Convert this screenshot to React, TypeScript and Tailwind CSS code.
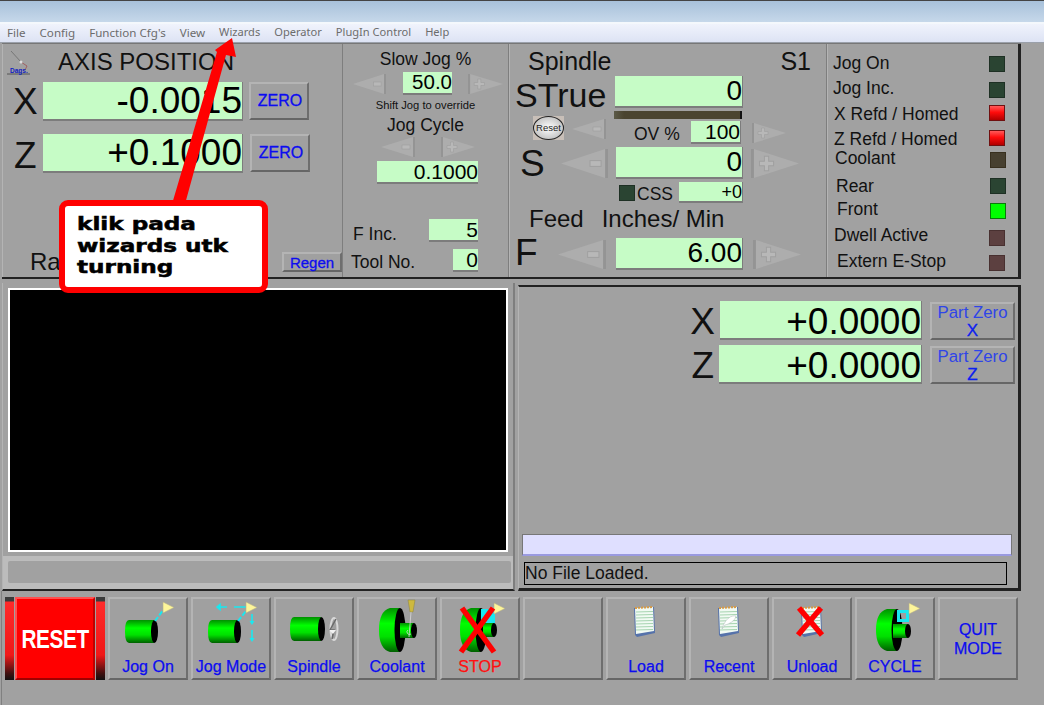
import React from "react";

const bevel = "border-2 border-t-[#b4b4b4] border-l-[#b4b4b4] border-b-[#666666] border-r-[#6e6e6e] bg-[#a0a0a0]";
const fieldBase = "flex items-center justify-end bg-[#c6fcc6] border-b-2 border-r border-b-[#7c7c7c] border-r-[#7c7c7c] text-black leading-none shrink-0";

function ArrowL({ className, m = true }: { className: string; m?: boolean }) {
  return (
    <svg viewBox="0 0 34 20" preserveAspectRatio="none" className={className}>
      <polygon points="0,10 32,0 32,20" fill="#adadad" />
      <rect x="32" y="0" width="2" height="20" fill="#949494" />
      {m && <rect x="21" y="8" width="8" height="4" fill="#b8b8b8" stroke="#a0a0a0" strokeWidth="0.7" />}
    </svg>
  );
}
function ArrowR({ className }: { className: string }) {
  return (
    <svg viewBox="0 0 34 20" preserveAspectRatio="none" className={className}>
      <polygon points="2,0 34,10 2,20" fill="#adadad" />
      <rect x="0" y="0" width="2" height="20" fill="#949494" />
      <path d="M6 8.5h3.5v-3.5h3v3.5h3.5v3h-3.5v3.5h-3v-3.5h-3.5z" fill="#b8b8b8" stroke="#a0a0a0" strokeWidth="0.7" />
    </svg>
  );
}
function Led({ color }: { color: "green" | "red" | "olive" | "lime" | "brown" }) {
  const c = {
    green: "bg-[#2a4432] border-[#1e3024]",
    red: "bg-[linear-gradient(#ff5a5a,#ff0c0c_45%,#b00000)] border-[#701010]",
    olive: "bg-[#474030] border-[#38301f]",
    lime: "bg-[#00ff00] border-[#0a7a0a]",
    brown: "bg-[#5c4040] border-[#483030]",
  }[color];
  return <div className={`w-4 h-4 border shrink-0 ${c}`} />;
}
function Defs() {
  return (
    <defs>
      <linearGradient id="gc" x1="0" y1="0" x2="0" y2="1">
        <stop offset="0" stopColor="#009000" />
        <stop offset="0.35" stopColor="#00ff00" />
        <stop offset="0.65" stopColor="#00e000" />
        <stop offset="1" stopColor="#006000" />
      </linearGradient>
    </defs>
  );
}
function Svg({ children }: { children: React.ReactNode }) {
  return (
    <svg viewBox="2 2 76 58" className="w-[76px] h-[58px] shrink-0">
      <Defs />
      {children}
    </svg>
  );
}
function Cyl({ x, y, w, h }: { x: number; y: number; w: number; h: number }) {
  return (
    <g>
      <path d={`M${x + 4} ${y} H${x + w - 4} V${y + h} H${x + 4} Q${x} ${y + h} ${x} ${y + h / 2} Q${x} ${y} ${x + 4} ${y}z`} fill="url(#gc)" />
      <ellipse cx={x + w - 3.5} cy={y + h / 2} rx="3.5" ry={h / 2} fill="#000" />
    </g>
  );
}
function Tri({ x, y }: { x: number; y: number }) {
  return <polygon points={`${x},${y} ${x + 11},${y + 5.5} ${x},${y + 11}`} fill="#fdf59a" stroke="#b5b08a" strokeWidth="0.6" />;
}
function Chuck({ x, y, h, sx, sy, sw, sh }: { x: number; y: number; h: number; sx: number; sy: number; sw: number; sh: number }) {
  return (
    <g>
      <path d={`M${x + 11} ${y} H${x + 21} V${y + h} H${x + 11} Q${x} ${y + h - 3} ${x} ${y + h / 2} Q${x} ${y + 3} ${x + 11} ${y}z`} fill="url(#gc)" />
      <ellipse cx={x + 21} cy={y + h / 2} rx="5.5" ry={h / 2} fill="#000" />
      <rect x={sx} y={sy} width={sw} height={sh} fill="url(#gc)" />
      <ellipse cx={sx + sw} cy={sy + sh / 2} rx="3" ry={sh / 2} fill="#000" />
    </g>
  );
}
function Pad({ x, children }: { x: number; children?: React.ReactNode }) {
  return (
    <g>
      <polygon points={`${x},11 ${x + 20},10 ${x + 21},36 ${x + 3},40 ${x + 1},38`} fill="#5572aa" />
      <polygon points={`${x + 1},11 ${x + 19},10 ${x + 20},34 ${x + 2},37`} fill="#f1faf3" />
      {[15, 18, 21, 24, 27, 30, 33].map((y) => (
        <line key={y} x1={x + 2} y1={y} x2={x + 19} y2={y - 0.5} stroke="#a6d4b0" strokeWidth="1" />
      ))}
      <line x1={x + 1} y1="11" x2={x + 19} y2="10" stroke="#d79a45" strokeWidth="2" strokeDasharray="2 1" />
      {children}
    </g>
  );
}
const X = ({ a, b, c, d }: { a: number; b: number; c: number; d: number }) => (
  <g stroke="#ff0000" strokeWidth="5.5">
    <line x1={a} y1={b} x2={c} y2={d} />
    <line x1={c - 1} y1={b} x2={a - 1} y2={d} />
  </g>
);
const cyanDash = { stroke: "#19e8f0", strokeWidth: 2, strokeDasharray: "5 2", fill: "none" };

function Btn({ label, children, red, labelClass }: { label: string; children?: React.ReactNode; red?: boolean; labelClass?: string }) {
  return (
    <div className={`${bevel} w-[80px] h-[83px] flex flex-col items-center shrink-0`}>
      {children ?? <div className="h-[58px] shrink-0" />}
      <span className={`text-[16px] leading-[18px] mt-px [-webkit-text-stroke:0.25px_currentColor] ${red ? "text-[#ff1010]" : "text-[#0c0cf0]"} ${labelClass ?? ""}`}>{label}</span>
    </div>
  );
}
function Zero({ className }: { className: string }) {
  return <div className={`${bevel} w-[60px] h-[38px] flex items-center justify-center pl-[2px] text-[16px] text-[#0c0cf0] [-webkit-text-stroke:0.3px_currentColor] ${className}`}>ZERO</div>;
}
function PartZero({ axis }: { axis: string }) {
  return (
    <div className={`${bevel} ml-[8px] w-[85px] h-[38px] flex flex-col items-center text-[#2f45e8] shrink-0`}>
      <span className="text-[16.8px] leading-[17px]">Part Zero</span>
      <span className="text-[17px] leading-[18px] pt-px text-[#0c20f0] [-webkit-text-stroke:0.3px_currentColor]">{axis}</span>
    </div>
  );
}
function LedRow({ label, color, className, textClass }: { label: string; color: "green" | "red" | "olive" | "lime" | "brown"; className: string; textClass?: string }) {
  return (
    <div className={`flex items-center justify-between h-4 ${className}`}>
      <span className={`text-[17.5px] leading-none whitespace-nowrap ${textClass ?? ""}`}>{label}</span>
      <Led color={color} />
    </div>
  );
}

export default function App() {
  return (
    <div className="relative w-[1044px] h-[705px] overflow-hidden flex flex-col bg-[#a1a1a1] text-[#111] [font-family:'Liberation_Sans',Arial,sans-serif]">
      {/* title bar */}
      <div className="h-[22px] shrink-0 border-t border-t-[#444] bg-[linear-gradient(#a8c1da,#c6d8ea)]" />
      {/* menu */}
      <div className="h-[21px] shrink-0 flex items-center pl-[7px] pb-px gap-[14px] border-t-2 border-t-[#f4f8fc] border-b border-b-[#9aa0aa] bg-[linear-gradient(#f0f3fc,#dde3f4)] text-[11.6px] text-[#6c6c6c] [font-family:'Noto_Sans',sans-serif]">
        <span>File</span>
        <span>Config</span>
        <span>Function Cfg's</span>
        <span>View</span>
        <span className="text-[11.1px]">Wizards</span>
        <span className="text-[11.1px]">Operator</span>
        <span className="text-[11.1px]">PlugIn Control</span>
        <span className="text-[11.1px]">Help</span>
      </div>

      {/* upper row */}
      <div className="h-[238px] shrink-0 flex pl-[2px]">
        <div className="flex h-[236px] border-b-2 border-b-[#222] border-t border-t-[#777]">
          {/* axis */}
          <div className="w-[341px] flex flex-col border-l border-l-[#b4b4b4] border-r border-r-[#7e7e7e]">
            <div className="h-[36px] flex items-center pl-[4px] shrink-0">
              <svg viewBox="0 0 24 26" className="w-[24px] h-[26px] shrink-0">
                <line x1="4" y1="2" x2="14" y2="13" stroke="#777" strokeWidth="1" />
                <path d="M14 13 L20 17 L18 21" stroke="#a05050" strokeWidth="0.8" fill="none" />
                <circle cx="14" cy="13" r="1.5" fill="#ddd" />
                <line x1="0" y1="25" x2="23" y2="25" stroke="#555" strokeWidth="1" />
                <text x="3" y="24" fontSize="6.5" fill="#1020c0" fontWeight="bold">Dags.</text>
              </svg>
              <span className="ml-[27px] text-[24px] leading-none whitespace-nowrap">AXIS POSITION</span>
            </div>
            <div className="mt-[2px] h-[39px] flex shrink-0">
              <div className="w-[40px] pl-[10px] text-[37px] leading-[39px]">X</div>
              <div className={`${fieldBase} w-[200px] h-[39px] text-[37px]`}>-0.0015</div>
              <Zero className="ml-[6px]" />
            </div>
            <div className="mt-[13px] h-[39px] flex shrink-0">
              <div className="w-[40px] pl-[11px] pt-[2px] text-[37px] leading-[39px]">Z</div>
              <div className={`${fieldBase} w-[200px] h-[39px] text-[37px]`}>+0.1000</div>
              <Zero className="ml-[7px]" />
            </div>
            <div className="mt-[79px] h-[20px] flex items-center justify-between pl-[27px] shrink-0">
              <span className="text-[24px] leading-none">Ra</span>
              <div className={`${bevel} w-[60px] h-[20px] flex items-center justify-center text-[15px] text-[#0c0cf0] leading-none [-webkit-text-stroke:0.3px_currentColor]`}>Regen</div>
            </div>
          </div>

          {/* jog */}
          <div className="w-[166px] flex flex-col border-r border-r-[#7e7e7e]">
            <div className="mt-[5px] h-[20px] text-[17.5px] leading-[20px] text-center shrink-0">Slow Jog %</div>
            <div className="mt-[3px] h-[23px] flex items-center pl-[10px] shrink-0">
              <ArrowL className="w-[33px] h-[20px] shrink-0" />
              <div className={`${fieldBase} ml-[17px] w-[49px] h-[23px] text-[20.5px] border-b-0 border-r-0`}>50.0</div>
              <ArrowR className="ml-[16px] w-[35px] h-[20px] shrink-0" />
            </div>
            <div className="mt-[3px] h-[14px] text-[11.2px] leading-[14px] text-center shrink-0">Shift Jog to override</div>
            <div className="mt-[3px] h-[20px] text-[17.5px] leading-[20px] text-center shrink-0">Jog Cycle</div>
            <div className="mt-[2px] h-[20px] flex pl-[38px] shrink-0">
              <ArrowL className="w-[34px] h-[20px] shrink-0" />
              <ArrowR className="ml-[26px] w-[34px] h-[20px] shrink-0" />
            </div>
            <div className={`${fieldBase} mt-[4px] ml-[34px] w-[101px] h-[23px] text-[21px] border-b-0 border-r-0`}>0.1000</div>
            <div className="mt-[35px] h-[23px] flex items-center justify-between pl-[10px] pr-[30px] shrink-0">
              <span className="text-[17.5px] leading-none mt-[8px]">F Inc.</span>
              <div className={`${fieldBase} w-[49px] h-[23px] text-[21px] border-b-0 border-r-0`}>5</div>
            </div>
            <div className="mt-[7px] h-[23px] flex items-center justify-between pl-[8px] pr-[30px] shrink-0">
              <span className="text-[17.5px] leading-none mt-[4px]">Tool No.</span>
              <div className={`${fieldBase} w-[25px] h-[23px] text-[21px] border-b-0 border-r-0`}>0</div>
            </div>
          </div>

          {/* spindle */}
          <div className="w-[318px] flex flex-col border-l border-l-[#b4b4b4] border-r border-r-[#7e7e7e]">
            <div className="mt-[5px] h-[24px] flex items-center justify-between pl-[18px] pr-[15px] text-[25px] leading-none shrink-0">
              <span>Spindle</span>
              <span>S1</span>
            </div>
            <div className="mt-[3px] h-[32px] flex items-center shrink-0">
              <div className="w-[105px] pl-[5px] pt-[6px] text-[34px] leading-none whitespace-nowrap">STrue</div>
              <div className={`${fieldBase} w-[128px] h-[32px] text-[28px]`}>0</div>
            </div>
            <div className="mt-[3px] h-[33px] flex shrink-0">
              <div className="w-[104px] pl-[23px] pt-[5px] flex items-start shrink-0">
                <div className="w-[31px] h-[24px] bg-[#c8bfb8] flex items-center justify-center shrink-0">
                  <div className="w-[31px] h-[24px] rounded-[50%] border border-[#222] bg-[radial-gradient(#ffffff,#b0b0b0)] flex items-center justify-center text-[9.5px] leading-none text-[#222]">Reset</div>
                </div>
                <ArrowL className="ml-[8px] mt-[3px] w-[34px] h-[20px] shrink-0" />
              </div>
              <div className="flex flex-col">
                <div className="w-[128px] h-[8px] bg-[linear-gradient(90deg,#5c5a48,#4a4430_8%,#4a4430)] border-r-2 border-r-[#111] shrink-0" />
                <div className="mt-[2px] h-[23px] flex items-center">
                  <span className="ml-[20px] w-[57px] text-[17.5px] leading-none mt-[4px]">OV %</span>
                  <div className={`${fieldBase} w-[50px] h-[23px] text-[21px]`}>100</div>
                  <ArrowR className="ml-[11px] w-[34px] h-[20px] shrink-0" />
                </div>
              </div>
            </div>
            <div className="mt-[3px] h-[32px] flex items-center shrink-0">
              <div className="w-[51px] pl-[10px] text-[37px] leading-none shrink-0">S</div>
              <ArrowL className="w-[47px] h-[29px] shrink-0" />
              <div className={`${fieldBase} ml-[8px] w-[127px] h-[32px] text-[28px]`}>0</div>
              <ArrowR className="ml-[8px] w-[48px] h-[29px] shrink-0" />
            </div>
            <div className="mt-[3px] h-[21px] flex items-center pl-[109px] shrink-0">
              <Led color="green" />
              <span className="ml-[2px] w-[42px] text-[17.5px] leading-none mt-[4px]">CSS</span>
              <div className={`${fieldBase} w-[64px] h-[21px] text-[18px]`}>+0</div>
            </div>
            <div className="mt-[4px] h-[24px] flex items-center pl-[19px] text-[24px] leading-none whitespace-nowrap shrink-0">
              <span>Feed</span>
              <span className="ml-[18px]">Inches/ Min</span>
            </div>
            <div className="mt-[7px] h-[32px] flex items-center shrink-0">
              <div className="w-[48px] pl-[5px] pb-[4px] text-[37px] leading-none shrink-0">F</div>
              <ArrowL className="w-[48px] h-[29px] shrink-0" />
              <div className={`${fieldBase} ml-[10px] w-[127px] h-[32px] text-[28px]`}>6.00</div>
              <ArrowR className="ml-[10px] w-[48px] h-[29px] shrink-0" />
            </div>
          </div>

          {/* leds */}
          <div className="w-[194px] flex flex-col border-l border-l-[#b4b4b4] border-r-[3px] border-r-[#222]">
            <LedRow label="Jog On" color="green" className="mt-[12px] pl-[5px] pr-[13px]" />
            <LedRow label="Jog Inc." color="green" className="mt-[10px] pl-[5px] pr-[13px]" textClass="mb-[2px]" />
            <LedRow label="X Refd / Homed" color="red" className="mt-[7px] pl-[6px] pr-[13px]" textClass="mt-[4px]" />
            <LedRow label="Z Refd / Homed" color="red" className="mt-[9px] pl-[6px] pr-[13px]" textClass="mt-[4px]" />
            <LedRow label="Coolant" color="olive" className="mt-[6px] pl-[7px] pr-[12px]" textClass="mb-[2px]" />
            <LedRow label="Rear" color="green" className="mt-[10px] pl-[8px] pr-[12px]" textClass="mt-[2px]" />
            <LedRow label="Front" color="lime" className="mt-[9px] pl-[9px] pr-[12px]" textClass="mb-[2px]" />
            <LedRow label="Dwell Active" color="brown" className="mt-[11px] pl-[6px] pr-[13px]" textClass="mb-[5px]" />
            <LedRow label="Extern E-Stop" color="brown" className="mt-[9px] pl-[9px] pr-[13px]" textClass="mb-[2px]" />
          </div>
        </div>
      </div>

      {/* lower row */}
      <div className="h-[310px] shrink-0 flex pl-[2px]">
        <div className="mt-[2px] w-[513px] h-[308px] flex flex-col shrink-0 border-l border-l-[#b4b4b4] border-r-2 border-r-[#7e7e7e] border-b-2 border-b-[#222]">
          <div className="ml-[5px] mt-[5px] w-[500px] h-[264px] bg-black border-2 border-white shrink-0" />
          <div className="mt-[4px] h-[33px] bg-[#bcbcbc] pl-[5px] pr-[2px] py-[5px] shrink-0">
            <div className="h-[22px] bg-[#a1a1a1] rounded-[2px]" />
          </div>
        </div>
        <div className="ml-[3px] mt-[4px] w-[503px] h-[306px] flex flex-col shrink-0 border-t-2 border-t-[#222] border-r-[3px] border-r-[#222] border-b-[3px] border-b-[#222] border-l border-l-[#b4b4b4]">
          <div className="mt-[14px] h-[39px] flex items-center justify-end pr-[3px] shrink-0">
            <span className="text-[37px] leading-none mr-[5px] pt-[2px]">X</span>
            <div className={`${fieldBase} pt-[3px] w-[202px] h-[39px] text-[37px]`}>+0.0000</div>
            <PartZero axis="X" />
          </div>
          <div className="mt-[5px] h-[39px] flex items-center justify-end pr-[3px] shrink-0">
            <span className="text-[37px] leading-none mr-[5px] pt-[2px]">Z</span>
            <div className={`${fieldBase} pt-[3px] w-[203px] h-[39px] text-[37px]`}>+0.0000</div>
            <PartZero axis="Z" />
          </div>
          <div className="mt-[150px] ml-[3px] w-[490px] h-[22px] bg-[#dfdfff] border border-[#777] border-b-2 border-b-[#9a9ae0] shrink-0" />
          <div className="mt-[6px] ml-[5px] w-[483px] h-[23px] border border-black flex items-center text-[17.5px] leading-none shrink-0">No File Loaded.</div>
        </div>
      </div>

      {/* bottom buttons */}
      <div className="flex-1 ml-px pt-[6px] flex pl-[3px] gap-[3px] border-l border-l-[#808080]">
        <div className="w-[100px] h-[83px] flex shrink-0">
          <div className="w-[9px] h-full bg-[linear-gradient(#3a3a3a_0,#3a3a3a_4px,#ff2a2a_5px,#f01818_70%,#401010_92%,#111)]" />
          <div className="mx-px w-[80px] h-full bg-[#ff0000] border-2 border-t-[#ff5050] border-l-[#ff5050] border-b-[#a00000] border-r-[#c00000] flex items-center justify-center">
            <span className="text-[26px] font-bold text-white leading-none scale-x-[0.8] tracking-[-0.5px]">RESET</span>
          </div>
          <div className="w-[9px] h-full bg-[linear-gradient(#3a3a3a_0,#3a3a3a_4px,#ff2a2a_5px,#f01818_70%,#401010_92%,#111)]" />
        </div>
        <Btn label="Jog On">
          <Svg>
            <Cyl x={17} y={23} w={33} h={23} />
            <line x1="47" y1="24" x2="56" y2="12" {...cyanDash} />
            <Tri x={55} y={5} />
          </Svg>
        </Btn>
        <Btn label="Jog Mode">
          <Svg>
            <Cyl x={17} y={23} w={33} h={23} />
            <line x1="47" y1="24" x2="55" y2="14" {...cyanDash} />
            <path d="M26 10l3-2.5v5zM29 10h7M43 10h9M52 10l3 0" stroke="#19e8f0" strokeWidth="1.6" fill="#19e8f0" />
            <path d="M61 17v9M61 33v10" stroke="#19e8f0" strokeWidth="1.6" />
            <path d="M58.5 24h5L61 28zM58.5 41h5L61 45z" fill="#19e8f0" />
            <Tri x={55} y={5} />
          </Svg>
        </Btn>
        <Btn label="Spindle">
          <Svg>
            <Cyl x={16} y={20} w={35} h={24} />
            <ellipse cx="60" cy="32" rx="3.5" ry="11" fill="none" stroke="#d8d8d8" strokeWidth="2" />
            <path d="M62 22 L56 33 L60 33 L58 42" stroke="#6a6a6a" strokeWidth="1.5" fill="none" />
            <path d="M55 33h7l-3 4z" fill="#f2f2f2" />
          </Svg>
        </Btn>
        <Btn label="Coolant">
          <Svg>
            <Chuck x={22} y={11} h={44} sx={43} sy={26} sw={14} sh={15} />
            <polygon points="51,3 58,3 56,15 53,15" fill="#cdb93f" stroke="#8a8040" strokeWidth="0.5" />
            <path d="M54 15 L52 40 M51 33 a2 2 0 1 0 3 4" stroke="#d8d8d8" strokeWidth="0.8" fill="none" />
          </Svg>
        </Btn>
        <Btn label="STOP" red>
          <Svg>
            <Chuck x={20} y={11} h={44} sx={43} sy={26} sw={11} sh={14} />
            <rect x="41" y="12" width="14" height="14" fill="#19e8f0" />
            <Tri x={54} y={6} />
            <X a={22} b={11} c={54} d={55} />
          </Svg>
        </Btn>
        <Btn label="" />
        <Btn label="Load">
          <Svg>
            <Pad x={28} />
          </Svg>
        </Btn>
        <Btn label="Recent">
          <Svg>
            <Pad x={29}>
              <path d="M33 32 C36 22 42 18 47 19 C46 24 40 27 36 28 Z" fill="#fff" stroke="#9aa" strokeWidth="0.4" />
            </Pad>
          </Svg>
        </Btn>
        <Btn label="Unload">
          <Svg>
            <Pad x={29} />
            <X a={27} b={11} c={50} d={38} />
          </Svg>
        </Btn>
        <Btn label="CYCLE">
          <Svg>
            <Chuck x={21} y={12} h={42} sx={38} sy={27} sw={15} sh={14} />
            <rect x="43.5" y="14.5" width="9" height="9" fill="none" stroke="#19e8f0" strokeWidth="3" />
            <Tri x={54} y={6} />
          </Svg>
        </Btn>
        <div className={`${bevel} w-[80px] h-[83px] flex flex-col items-center justify-center text-[16px] leading-[19px] text-[#0c0cf0] [-webkit-text-stroke:0.25px_currentColor] shrink-0`}>
          <span className="text-center">QUIT<br />MODE</span>
        </div>
      </div>

      {/* annotation */}
      <svg viewBox="0 0 300 300" className="absolute left-0 top-0 w-[300px] h-[300px] pointer-events-none">
        <polygon points="232,38 236,57 226,55 185,204 172,204 217,52 215,50" fill="#ff0000" />
      </svg>
      <div className="absolute left-[59px] top-[200px] w-[209px] h-[93px] bg-white border-[6px] border-[#ff0000] rounded-[9px] pl-[12px] pt-[8px] text-black">
        <div className="[font-family:'DejaVu_Sans',sans-serif] font-bold text-[17px] leading-[21.5px] scale-x-[1.36] origin-left whitespace-nowrap [-webkit-text-stroke:0.5px_#000]">
          klik pada<br />wizards utk<br />turning
        </div>
      </div>
    </div>
  );
}
